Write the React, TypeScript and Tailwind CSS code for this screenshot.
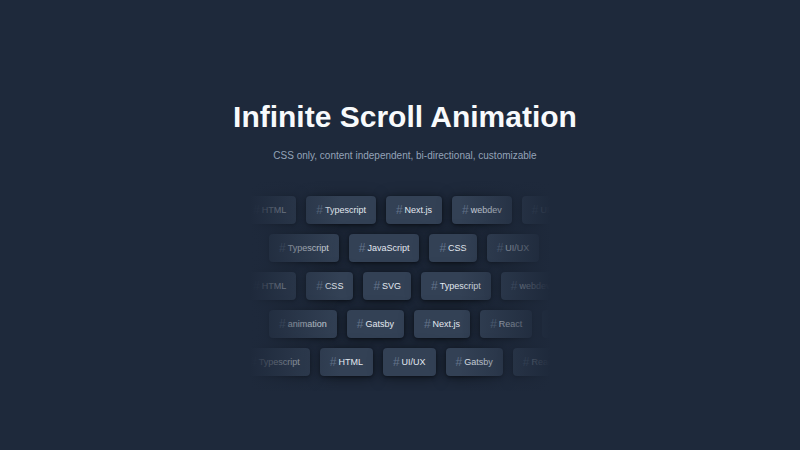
import React from "react";

type Row = { offset: string; tags: string[] };

// Each row is a snapshot of a looping marquee; the margin is its current scroll position.
const rows: Row[] = [
  { offset: "ml-[-7px]", tags: ["HTML", "Typescript", "Next.js", "webdev", "UI/UX", "CSS"] },
  { offset: "ml-[19px]", tags: ["Typescript", "JavaScript", "CSS", "UI/UX", "Gatsby"] },
  { offset: "ml-[-7px]", tags: ["HTML", "CSS", "SVG", "Typescript", "webdev", "React"] },
  { offset: "ml-[19px]", tags: ["animation", "Gatsby", "Next.js", "React", "Tailwind"] },
  { offset: "ml-[-10px]", tags: ["Typescript", "HTML", "UI/UX", "Gatsby", "React", "SVG"] },
];

function Tag({ label }: { label: string }) {
  return (
    <div className="mr-[10px] flex shrink-0 items-center gap-[2px] rounded-[4px] bg-[#334155] px-[10px] py-[7px] text-[9px] leading-[11px] text-[#e2e8f0] shadow-[0_1px_2px_rgba(0,0,0,0.2),0_1px_5px_rgba(0,0,0,0.3),0_2px_15px_rgba(0,0,0,0.4)]">
      <span className="text-[12px] leading-[14px] text-[#64748b]">#</span>
      {label}
    </div>
  );
}

export default function App() {
  return (
    <div
      className="flex h-[450px] w-full flex-col items-center bg-[#1e293b] pt-[100px]"
      style={{ fontFamily: '"Liberation Sans", Arial, sans-serif' }}
    >
      <h1 className="ml-[10px] text-[30px] font-bold leading-[34px] text-[#f8fafc]">Infinite Scroll Animation</h1>
      <p className="ml-[10px] mt-[16px] text-[10px] leading-[12px] text-[#94a3b8]">
        CSS only, content independent, bi-directional, customizable
      </p>
      <div className="relative mt-[19px] flex w-[300px] flex-col gap-[10px] overflow-hidden py-[15px]">
        {rows.map((row, i) => (
          <div key={i} className={`flex w-max ${row.offset}`}>
            {row.tags.map((t, j) => (
              <Tag key={j} label={t} />
            ))}
          </div>
        ))}
        <div className="pointer-events-none absolute inset-0 bg-[linear-gradient(90deg,#1e293b,transparent_30%,transparent_70%,#1e293b)]" />
      </div>
    </div>
  );
}
